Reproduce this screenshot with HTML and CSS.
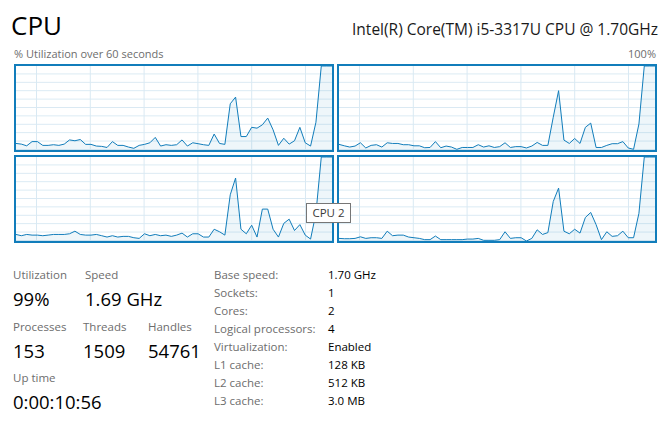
FILE: index.html
```html
<!DOCTYPE html>
<html lang="en">
<head>
  <meta charset="UTF-8" />
  <title>CPU</title>
  <link rel="stylesheet" href="styles.css">
</head>
<body>
  <header class="perf-header">
    <h1>CPU</h1>
    <span class="cpu-model">Intel(R) Core(TM) i5-3317U CPU @ 1.70GHz</span>
  </header>

  <div class="graph-caption">
    <span>% Utilization over 60 seconds</span>
    <span>100%</span>
  </div>

  <div class="graphs">
    <div class="graph"></div>
    <div class="graph"></div>
    <div class="graph"></div>
    <div class="graph"></div>
    <div class="tooltip">CPU 2</div>
  </div>

  <section class="stats">
    <div class="stat-panel">
      <div class="stat-row">
        <div class="stat w-util">
          <div class="stat-label">Utilization</div>
          <div class="stat-value">99%</div>
        </div>
        <div class="stat">
          <div class="stat-label">Speed</div>
          <div class="stat-value">1.69 GHz</div>
        </div>
      </div>
      <div class="stat-row">
        <div class="stat w-proc">
          <div class="stat-label">Processes</div>
          <div class="stat-value">153</div>
        </div>
        <div class="stat w-thr">
          <div class="stat-label">Threads</div>
          <div class="stat-value">1509</div>
        </div>
        <div class="stat">
          <div class="stat-label">Handles</div>
          <div class="stat-value">54761</div>
        </div>
      </div>
      <div class="stat-row">
        <div class="stat">
          <div class="stat-label">Up time</div>
          <div class="stat-value">0:00:10:56</div>
        </div>
      </div>
    </div>

    <dl class="specs">
      <dt>Base speed:</dt><dd>1.70 GHz</dd>
      <dt>Sockets:</dt><dd>1</dd>
      <dt>Cores:</dt><dd>2</dd>
      <dt>Logical processors:</dt><dd>4</dd>
      <dt>Virtualization:</dt><dd>Enabled</dd>
      <dt>L1 cache:</dt><dd>128 KB</dd>
      <dt>L2 cache:</dt><dd>512 KB</dd>
      <dt>L3 cache:</dt><dd>3.0 MB</dd>
    </dl>
  </section>

  <script>
    // per-core utilization samples, one per second, oldest first
    const cores = [
      [7.8,7,5,10,10,5.5,5.5,6.3,5.5,7, 12,11,12.5,6.7,6.7,4.7,4.3,3,10,5.5, 5.5,3.5,2,5.5,6.7,8.6,15,4.7,6.3,5.5, 6.3,12,4.7,8.6,7.5,6.3,5.5,19,7.8,6.7, 55,63,16,16,27,26,30,38,24,5.5, 14,7,11,27,8.6,4.7,33,100,100,100],
      [6.7,5,3.5,4.7,8.6,2.4,5.5,6.3,3.5,8.6, 7.8,7.8,6.3,6.3,5,5,2.7,3,10,2.7, 4.7,3.5,0.8,3,3,3,6.3,3.5,5,3, 4,8.6,3,4,4,2.4,4.7,9,5.5,5.5, 39,70.6,11.8,7.8,13.7,7.8,27,32,3,3, 5.5,7.5,7.5,10,2.4,0.8,31,100,100,100],
      [7.8,6.3,7.8,7,7,6.3,7,7.8,7.8,7.8, 8.6,11.7,7.8,7,7,7.8,6.3,4.7,6.3,4.7, 5.5,5.5,3.9,3.1,8.6,6.3,7.8,6.3,7,5.5, 7,9.4,4.7,8.6,8.6,4.7,4.7,14,11,7, 55,75,14,8.6,18.8,4.7,38,38,14,4.7, 21,26,12.5,19.5,7,2.3,33,100,100,100],
      [3.1,2.7,2.7,3.1,5,3.1,3.9,3.9,3.1,11.7, 6.3,7,7,4.7,3.9,3.1,1.6,1.6,5.9,1.6, 1.6,1.6,1.6,1.6,2.3,2.3,3.1,0.8,0.8,0.8, 1.6,11,3.1,3.9,3.9,0,3.1,13.3,7.8,10, 47,63,11.7,8.6,14,9.4,28,34,19.5,1.6, 11,5.5,6.3,11.7,3.9,3.9,33,100,100,100]
    ];

    document.querySelectorAll(".graph").forEach((g, i) => {
      const pts = cores[i].map((v, x) => `${x},${100 - v}`).join(" ");
      g.innerHTML = `<svg viewBox="0 0 59 100" preserveAspectRatio="none">
        <polygon class="area" points="0,100 ${pts} 59,100" />
        <polyline class="line" points="${pts}" />
      </svg>`;
    });
  </script>
</body>
</html>
```

FILE: styles.css
```css
:root {
  --graph-line: #117dbb;
  --graph-grid: #d9e9f3;
  --label-color: #6d6d6d;
  --text-color: #000;
}
* {
  margin: 0;
  padding: 0;
  box-sizing: border-box;
}
body {
  background: #fff;
  color: var(--text-color);
  font-family: 'Open Sans', 'Noto Sans', sans-serif;
  width: 669px;
}
.perf-header {
  display: flex;
  justify-content: space-between;
  align-items: baseline;
  padding: 10px 11px 0 11px;
}
.perf-header h1 {
  font-size: 26px;
  font-weight: 400;
  line-height: 30px;
}
.cpu-model {
  font-size: 15.5px;
  color: #1a1a1a;
}
.graph-caption {
  display: flex;
  justify-content: space-between;
  margin: 7px 13px 0 14px;
  font-size: 11px;
  line-height: 14px;
  color: var(--label-color);
}
.graphs {
  position: relative;
  display: grid;
  grid-template-columns: 320px 320px;
  grid-template-rows: 88px 88px;
  gap: 3px;
  margin: 3px 0 0 14px;
}
.graph {
  border: 2px solid var(--graph-line);
  background-color: #fff;
  background-image:
    linear-gradient(to right, var(--graph-grid) 1px, transparent 1px),
    linear-gradient(to top, var(--graph-grid) 1px, transparent 1px);
  background-size: 53.8px 100%, 100% 10%;
  background-position: 20px 0, 0 0;
}
.graph svg {
  display: block;
  width: 100%;
  height: 100%;
  overflow: hidden;
}
.graph .area {
  fill: rgba(17, 125, 187, 0.07);
}
.graph .line {
  fill: none;
  stroke: var(--graph-line);
  stroke-width: 1;
  vector-effect: non-scaling-stroke;
  stroke-linejoin: round;
}
.tooltip {
  position: absolute;
  left: 292px;
  top: 139px;
  width: 45px;
  height: 20px;
  border: 1px solid #767676;
  background: #fff;
  color: #3a3a3a;
  font-size: 11.5px;
  line-height: 18px;
  text-align: center;
}
.stats {
  display: flex;
  margin: 22px 0 0 13px;
}
.stat-panel {
  width: 201px;
  padding-top: 2px;
}
.stat-row {
  display: flex;
  height: 51.6px;
}
.w-util {
  width: 72px;
}
.w-proc {
  width: 70px;
}
.w-thr {
  width: 65px;
}
.stat-label {
  font-size: 11.5px;
  line-height: 16px;
  color: var(--label-color);
}
.stat-value {
  margin-top: 4px;
  font-size: 18.5px;
  line-height: 24px;
  white-space: nowrap;
}
.specs {
  display: grid;
  grid-template-columns: 114px auto;
  grid-auto-rows: 18px;
  padding-top: 1px;
  font-size: 11.5px;
  line-height: 18px;
}
.specs dt {
  color: var(--label-color);
  white-space: nowrap;
}
.specs dd {
  color: var(--text-color);
  white-space: nowrap;
}
```
